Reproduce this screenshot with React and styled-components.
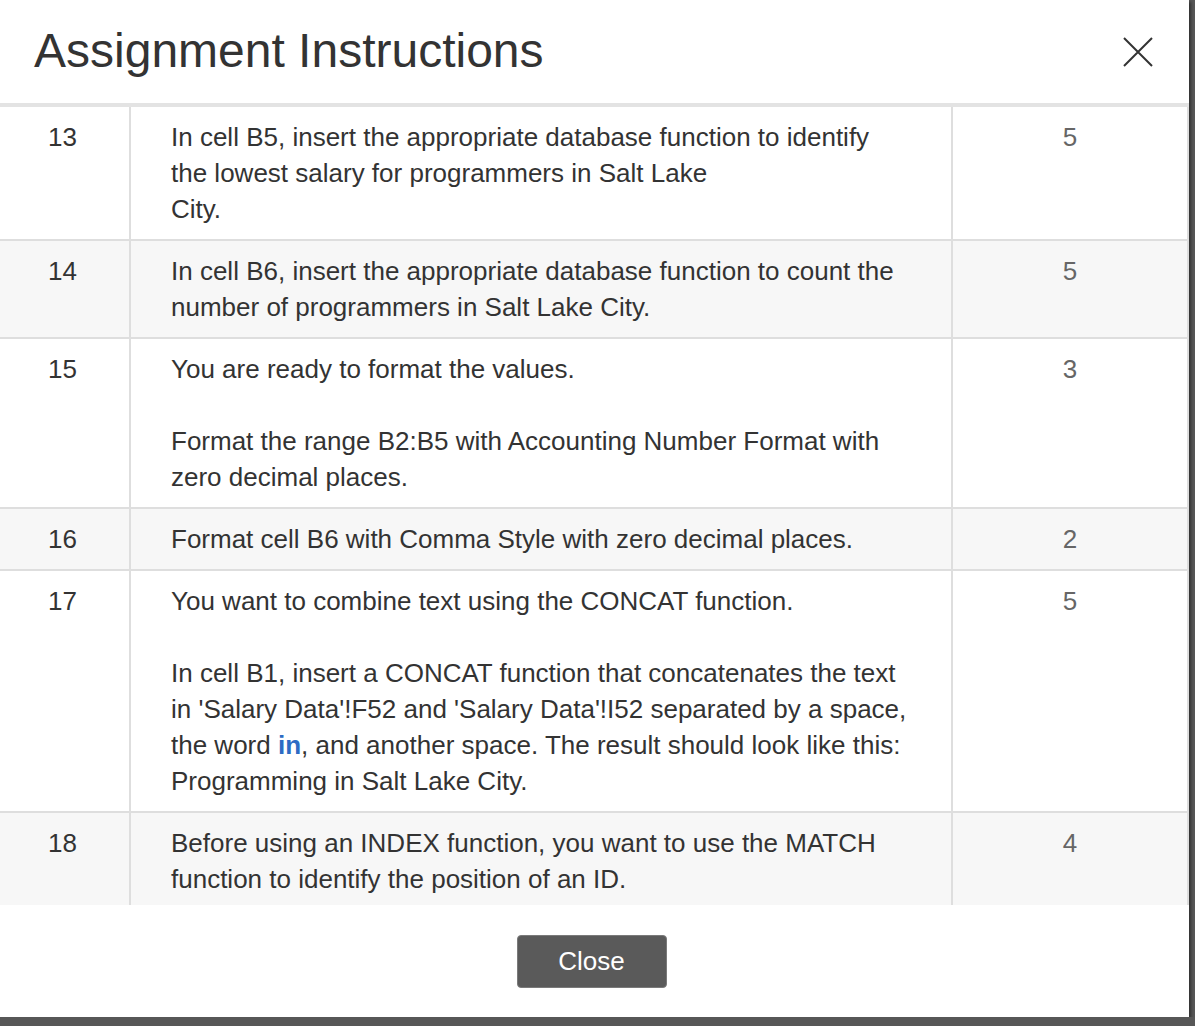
import React from "react"
import styled, { createGlobalStyle } from "styled-components"

const GlobalStyle = createGlobalStyle`
  html, body {
    margin: 0;
    padding: 0;
    background: #575757;
    font-family: "Liberation Sans", Arial, Helvetica, sans-serif;
  }
`

const Keyword = styled.strong`
  color: #2d6bc4;
  font-weight: 700;
`

const steps = [
  {
    num: 13,
    score: 5,
    paragraphs: [
      [
        "In cell B5, insert the appropriate database function to identify",
        "the lowest salary for programmers in Salt Lake",
        "City.",
      ],
    ],
  },
  {
    num: 14,
    score: 5,
    paragraphs: [
      [
        "In cell B6, insert the appropriate database function to count the",
        "number of programmers in Salt Lake City.",
      ],
    ],
  },
  {
    num: 15,
    score: 3,
    paragraphs: [
      ["You are ready to format the values."],
      [
        "Format the range B2:B5 with Accounting Number Format with",
        "zero decimal places.",
      ],
    ],
  },
  {
    num: 16,
    score: 2,
    paragraphs: [["Format cell B6 with Comma Style with zero decimal places."]],
  },
  {
    num: 17,
    score: 5,
    paragraphs: [
      ["You want to combine text using the CONCAT function."],
      [
        "In cell B1, insert a CONCAT function that concatenates the text",
        "in 'Salary Data'!F52 and 'Salary Data'!I52 separated by a space,",
        <>
          the word <Keyword>in</Keyword>, and another space. The result should look like this:
        </>,
        "Programming in Salt Lake City.",
      ],
    ],
  },
  {
    num: 18,
    score: 4,
    paragraphs: [
      [
        "Before using an INDEX function, you want to use the MATCH",
        "function to identify the position of an ID.",
      ],
    ],
  },
]

const CloseIcon = () => (
  <svg width="30" height="30" viewBox="0 0 30 30">
    <path d="M1 1 L29 29 M29 1 L1 29" stroke="#333" strokeWidth="2" fill="none" />
  </svg>
)

export default function App() {
  return (
    <>
      <GlobalStyle />
      <Dialog>
        <Header>
          <Title>Assignment Instructions</Title>
          <CloseButton aria-label="Close">
            <CloseIcon />
          </CloseButton>
        </Header>
        <Body>
          <Table>
            <colgroup>
              <col style={{ width: 130 }} />
              <col style={{ width: 822 }} />
              <col />
            </colgroup>
            <tbody>
              {steps.map((step, i) => (
                <Row key={step.num} $striped={i % 2 === 1}>
                  <NumCell>{step.num}</NumCell>
                  <TextCell>
                    {step.paragraphs.map((lines, p) => (
                      <Paragraph key={p}>
                        {lines.map((line, l) => (
                          <Line key={l}>{line}</Line>
                        ))}
                      </Paragraph>
                    ))}
                  </TextCell>
                  <ScoreCell>{step.score}</ScoreCell>
                </Row>
              ))}
            </tbody>
          </Table>
        </Body>
        <Footer>
          <Button>Close</Button>
        </Footer>
      </Dialog>
    </>
  )
}

const Dialog = styled.div`
  width: 1189px;
  height: 1017px;
  background: #fff;
  display: flex;
  flex-direction: column;
  box-shadow: 2px 2px 3px rgba(0, 0, 0, 0.45);
  overflow: hidden;
`

const Header = styled.header`
  height: 103px;
  flex-shrink: 0;
  display: flex;
  align-items: center;
  justify-content: space-between;
  padding: 0 36px 0 34px;
  border-bottom: 4px solid #e3e3e3;
`

const Title = styled.h1`
  margin: 0;
  font-size: 48px;
  font-weight: 400;
  color: #333;
  line-height: 54px;
  margin-top: -2px;
`

const CloseButton = styled.button`
  border: 0;
  background: none;
  padding: 0;
  display: flex;
  cursor: pointer;
`

const Body = styled.div`
  height: 798px;
  flex-shrink: 0;
  overflow: hidden;
`

const Table = styled.table`
  width: 1189px;
  table-layout: fixed;
  border-collapse: collapse;
  font-size: 26px;
  line-height: 36px;
  color: #333;
`

const Row = styled.tr`
  background: ${props => (props.$striped ? "#f7f7f7" : "#fff")};
  border-bottom: 2px solid #dedede;
`

const Cell = styled.td`
  vertical-align: top;
  padding: 12px 0;
`

const NumCell = styled(Cell)`
  text-align: center;
  border-right: 2px solid #dedede;
  padding-right: 4px;
`

const TextCell = styled(Cell)`
  padding-left: 40px;
  white-space: nowrap;
  border-right: 2px solid #dedede;
`

const ScoreCell = styled(Cell)`
  text-align: center;
  color: #666;
  border-right: 2px solid #dedede;
`

const Paragraph = styled.p`
  margin: 0;
  & + & {
    margin-top: 36px;
  }
`

const Line = styled.span`
  display: block;
`

const Footer = styled.footer`
  flex: 1;
  display: flex;
  align-items: center;
  justify-content: center;
  padding-right: 6px;
`

const Button = styled.button`
  width: 150px;
  height: 53px;
  background: #5a5a5a;
  border: 1px solid #7a7a7a;
  border-radius: 4px;
  color: #fff;
  font-family: "Liberation Sans", Arial, sans-serif;
  font-size: 26px;
  cursor: pointer;
`
